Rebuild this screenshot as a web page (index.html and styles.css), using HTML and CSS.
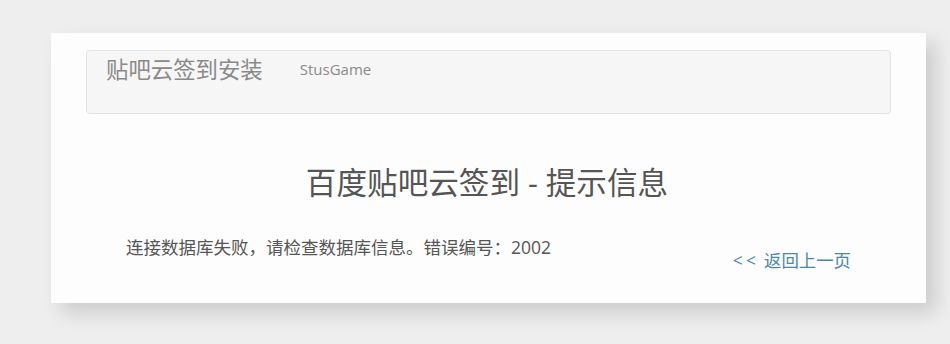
FILE: index.html
```html
<!DOCTYPE html>
<html lang="zh-CN">
<head>
<meta charset="utf-8">
<title>百度贴吧云签到 - 提示信息</title>
<link rel="stylesheet" href="styles.css">
</head>
<body>
<div class="card">
  <div class="well">
    <span class="brand">贴吧云签到安装</span>
    <span class="author">StusGame</span>
  </div>
  <h2 class="heading">百度贴吧云签到 - 提示信息</h2>
  <div class="content">
    <p class="msg">连接数据库失败，请检查数据库信息。错误编号：2002</p>
    <a class="back" href="#"><span class="arrows">&lt;&lt;</span> 返回上一页</a>
  </div>
</div>
</body>
</html>
```
FILE: styles.css
```css
html, body {
  margin: 0;
  padding: 0;
  background: #eeeeee;
}
body {
  box-sizing: border-box;
  min-height: 344px;
  padding: 33px 0 0 51px;
  font-family: "Open Sans", "Noto Sans CJK SC", sans-serif;
  color: #555;
}
.card {
  box-sizing: border-box;
  width: 875px;
  height: 270px;
  background: #fdfdfd;
  padding: 17px 35px 0;
  box-shadow: 10px 10px 18px rgba(0, 0, 0, 0.14);
}
.well {
  box-sizing: border-box;
  height: 64px;
  background: #f6f6f6;
  border: 1px solid #e3e3e3;
  border-radius: 4px;
  padding: 3px 0 0 19px;
  display: flex;
  align-items: baseline;
}
.brand {
  font-size: 22.4px;
  color: #8a8a8a;
  line-height: 32px;
}
.author {
  font-size: 15px;
  color: #8a8a8a;
  margin-left: 37px;
  position: relative;
  top: -3px;
}
.heading {
  margin: 0 0 0 -3px;
  padding-top: 48px;
  text-align: center;
  font-size: 30.6px;
  font-weight: normal;
  line-height: 40px;
  color: #555;
}
.content {
  display: flex;
  justify-content: space-between;
  padding: 0 40px;
  margin-top: 33px;
}
.msg {
  margin: 0;
  font-size: 17.5px;
  line-height: 24px;
  color: #555;
}
.back {
  margin-top: 13px;
  font-size: 17.4px;
  line-height: 24px;
  color: #4a8aa5;
  text-decoration: none;
}
.arrows {
  letter-spacing: 3.5px;
}
```
